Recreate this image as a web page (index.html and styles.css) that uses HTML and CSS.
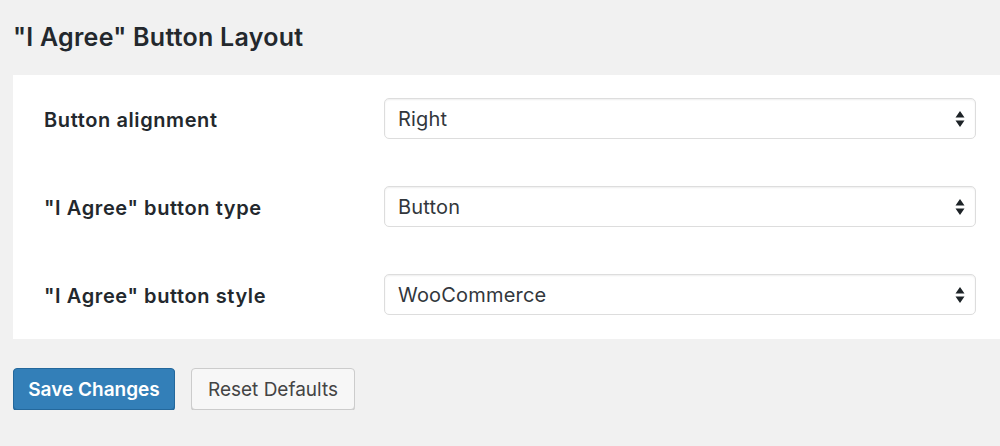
FILE: index.html
```html
<!DOCTYPE html>
<html lang="en">
<head>
  <meta charset="UTF-8">
  <title>"I Agree" Button Layout</title>
  <link rel="stylesheet" href="styles.css">
</head>
<body>
  <div class="wrap">
    <h2 class="title">"I Agree" Button Layout</h2>

    <div class="panel">
      <div class="row">
        <label for="alignment">Button alignment</label>
        <div class="select">
          <span>Right</span>
          <svg class="arrows" width="10" height="18" viewBox="0 0 10 18"><path d="M5 1 L9.5 7.5 H0.5 Z M0.5 10.5 H9.5 L5 17 Z" fill="#1d2327"/></svg>
        </div>
      </div>
      <div class="row">
        <label for="btnType">"I Agree" button type</label>
        <div class="select">
          <span>Button</span>
          <svg class="arrows" width="10" height="18" viewBox="0 0 10 18"><path d="M5 1 L9.5 7.5 H0.5 Z M0.5 10.5 H9.5 L5 17 Z" fill="#1d2327"/></svg>
        </div>
      </div>
      <div class="row">
        <label for="btnStyle">"I Agree" button style</label>
        <div class="select">
          <span>WooCommerce</span>
          <svg class="arrows" width="10" height="18" viewBox="0 0 10 18"><path d="M5 1 L9.5 7.5 H0.5 Z M0.5 10.5 H9.5 L5 17 Z" fill="#1d2327"/></svg>
        </div>
      </div>
    </div>

    <div class="button-group">
      <button class="primary-btn">Save Changes</button>
      <button class="secondary-btn">Reset Defaults</button>
    </div>
  </div>
</body>
</html>
```

FILE: styles.css
```css
body {
  margin: 0;
  background: #f1f1f1;
  font-family: Inter, "Open Sans", sans-serif;
  color: #23282d;
  overflow: hidden;
}

.wrap {
  padding-left: 13px;
}

.title {
  margin: 0;
  height: 75px;
  padding-top: 22px;
  box-sizing: border-box;
  font-size: 25px;
  line-height: 30px;
  font-weight: 600;
  letter-spacing: 0.25px;
  color: #23282d;
}

.panel {
  background: #fff;
  width: 987px;
  box-sizing: border-box;
  padding: 23px 24px 24px 31px;
  display: flex;
  flex-direction: column;
  gap: 47px;
}

.row {
  display: grid;
  grid-template-columns: 340px 1fr;
  align-items: center;
}

.row label {
  font-size: 20px;
  font-weight: 600;
  letter-spacing: 0.6px;
  color: #23282d;
  padding-top: 3px;
}

.select {
  height: 41px;
  box-sizing: border-box;
  border: 1px solid #ddd;
  border-radius: 5px;
  background: #fff;
  box-shadow: inset 0 1px 2px rgba(0,0,0,0.07);
  display: flex;
  align-items: center;
  justify-content: space-between;
  padding: 0 10px 0 13px;
  font-size: 20px;
  letter-spacing: 0.2px;
  color: #32373c;
}

.button-group {
  display: flex;
  gap: 16px;
  margin-top: 29px;
}

button {
  height: 42px;
  padding: 0 10px;
  border-radius: 4px;
  font-family: Inter, "Open Sans", sans-serif;
  font-size: 19px;
  cursor: pointer;
}

.primary-btn {
  width: 162px;
  background: #337fb8;
  border: 1px solid #24689c;
  color: #fff;
  font-weight: 600;
  box-shadow: 0 1px 0 #24689c;
}

.secondary-btn {
  width: 164px;
  background: #f7f7f7;
  border: 1px solid #ccc;
  color: #444;
  box-shadow: 0 1px 0 #ccc;
}
```
